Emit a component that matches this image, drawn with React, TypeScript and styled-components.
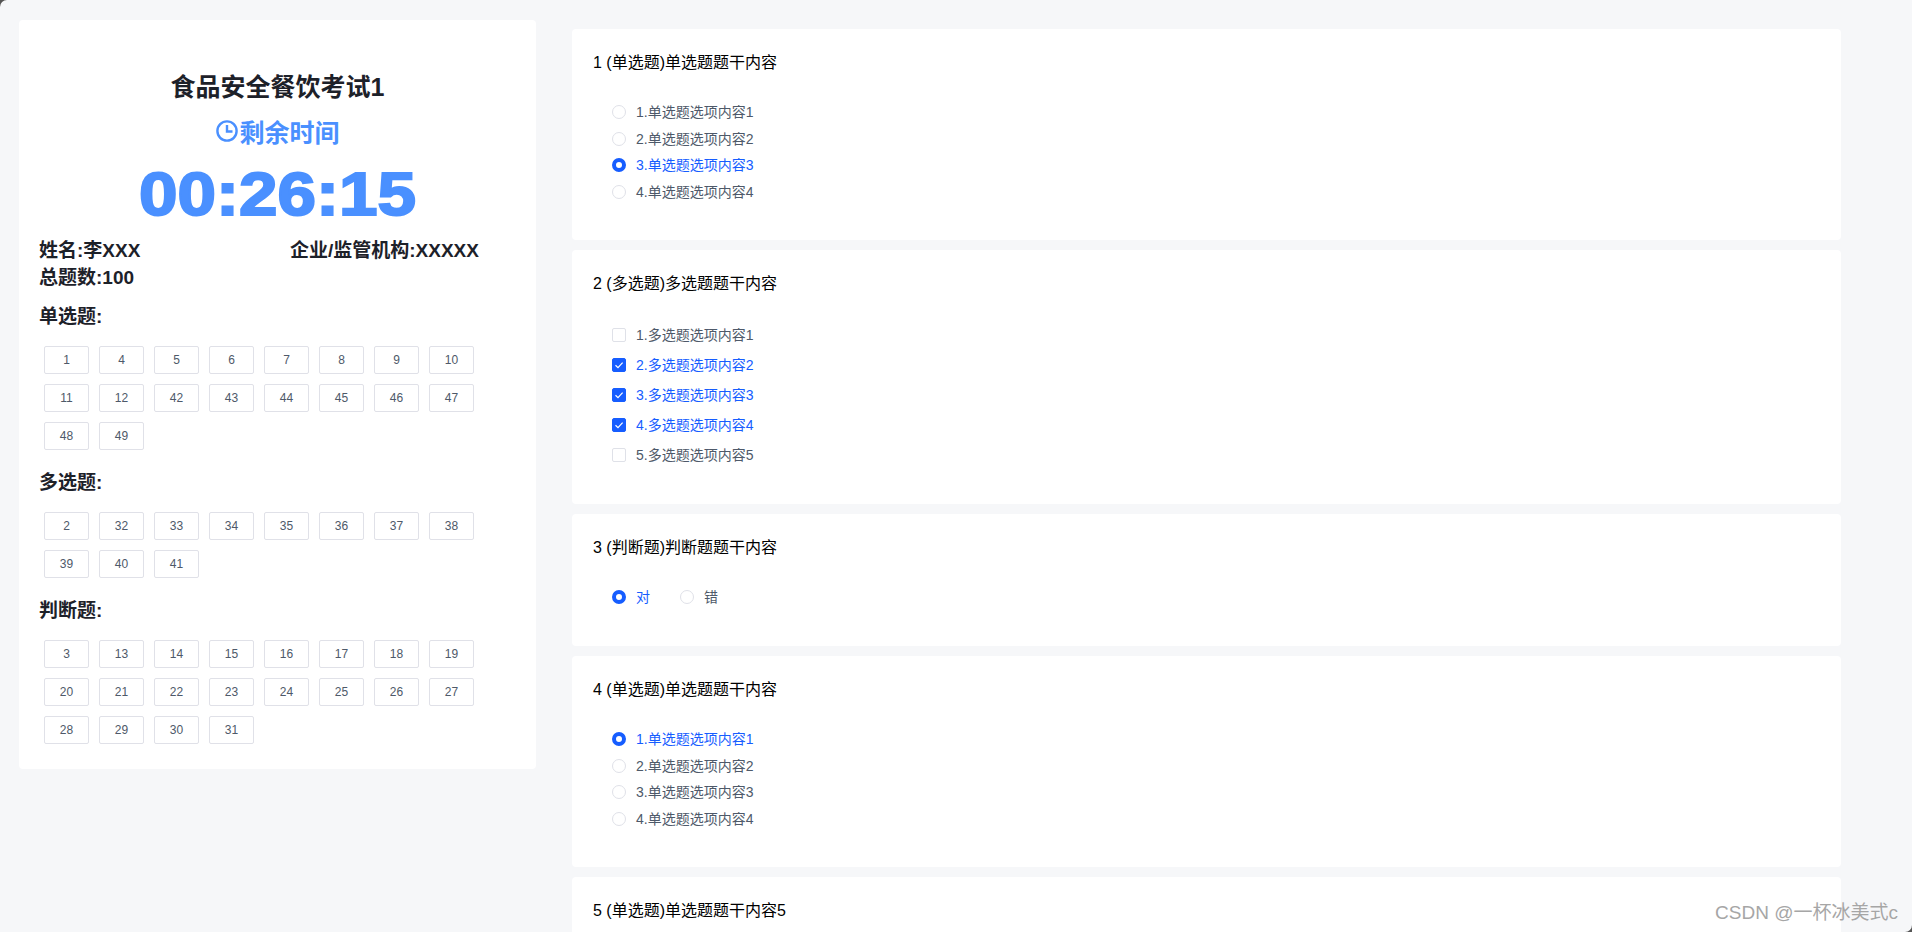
import React from "react";
import styled, { createGlobalStyle } from "styled-components";

const GlobalStyle = createGlobalStyle`
  html, body {
    margin: 0;
    padding: 0;
    height: 932px;
    overflow: hidden;
    background: #f6f7f9;
    font-family: "Liberation Sans", "Noto Sans CJK SC", sans-serif;
  }
`;

const Page = styled.div`
  position: relative;
  width: 1912px;
  height: 932px;
  overflow: hidden;
  display: flex;
  align-items: flex-start;
  gap: 36px;
  padding: 20px 0 0 19px;
  box-sizing: border-box;
  background: #f6f7f9;
`;

const Sidebar = styled.aside`
  width: 517px;
  height: 749px;
  flex: none;
  box-sizing: border-box;
  padding: 0 20px;
  background: #fff;
  border-radius: 4px;
  color: #1d2129;
`;

const ExamTitle = styled.h1`
  margin: 0;
  padding-top: 48px;
  height: 38px;
  line-height: 38px;
  font-size: 25px;
  font-weight: 700;
  text-align: center;
`;

const TimeLabel = styled.div`
  margin-top: 7px;
  height: 36px;
  display: flex;
  align-items: center;
  justify-content: center;
  font-size: 25px;
  font-weight: 700;
  color: #4a90ff;
`;

// the original digits are a black-weight face, so the bold one is widened and stroked
const Countdown = styled.div`
  margin-top: 7px;
  height: 76px;
  line-height: 76px;
  font-size: 61px;
  font-weight: 700;
  text-align: center;
  color: #4a90ff;
  -webkit-text-stroke: 2px #4a90ff;
  transform: scaleX(1.135);
`;

const Info = styled.div`
  display: grid;
  grid-template-columns: 251px 1fr;
  margin: 5px 0 12px;
  font-size: 19px;
  font-weight: 700;
  line-height: 27px;
`;

const SectionTitle = styled.h3`
  margin: 0;
  font-size: 19px;
  font-weight: 700;
  line-height: 28px;
`;

const NumberGrid = styled.div`
  display: flex;
  flex-wrap: wrap;
  gap: 10px;
  padding: 15px 0 19px 5px;
  width: 450px;
`;

const NumberButton = styled.button`
  width: 45px;
  height: 28px;
  padding: 0;
  box-sizing: border-box;
  border: 1px solid #e0e1e8;
  border-radius: 2px;
  background: #fff;
  font: 12px "Liberation Sans", sans-serif;
  color: #4e5969;
`;

const QuestionList = styled.main`
  margin-top: 9px;
  width: 1269px;
  flex: none;
  display: flex;
  flex-direction: column;
  gap: 10px;
`;

const QuestionCard = styled.section<{ $height: number }>`
  height: ${(p) => p.$height}px;
  flex: none;
  box-sizing: border-box;
  padding: 23px 21px 0;
  background: #fff;
  border-radius: 4px;
`;

const Stem = styled.div`
  font-size: 16px;
  line-height: 22px;
  color: #000;
`;

const Options = styled.div<{ $inline?: boolean; $gap: number; $top: number }>`
  display: flex;
  flex-direction: ${(p) => (p.$inline ? "row" : "column")};
  gap: ${(p) => p.$gap}px;
  margin-top: ${(p) => p.$top}px;
  padding-left: 19px;
`;

const Option = styled.label<{ $active?: boolean }>`
  display: flex;
  align-items: center;
  gap: 10px;
  height: 20px;
  font-size: 14px;
  line-height: 20px;
  color: ${(p) => (p.$active ? "#165dff" : "#4e5969")};
`;

const RadioDot = styled.span<{ $active?: boolean }>`
  width: 14px;
  height: 14px;
  flex: none;
  box-sizing: border-box;
  border-radius: 50%;
  border: ${(p) => (p.$active ? "4px solid #165dff" : "1px solid #dfe1e8")};
  background: #fff;
`;

const CheckBox = styled.span<{ $active?: boolean }>`
  width: 14px;
  height: 14px;
  flex: none;
  box-sizing: border-box;
  display: flex;
  align-items: center;
  justify-content: center;
  border-radius: 2px;
  border: 1px solid ${(p) => (p.$active ? "#165dff" : "#dfe1e8")};
  background: ${(p) => (p.$active ? "#165dff" : "#fff")};
`;

const Watermark = styled.div`
  position: absolute;
  right: 14px;
  bottom: 7px;
  font-size: 19px;
  line-height: 24px;
  color: #a6a6a6;
  text-shadow: 0 0 1px #fff;
`;

const WindowCorner = styled.svg<{ $flip?: boolean }>`
  position: absolute;
  width: 7px;
  height: 7px;
  ${(p) => (p.$flip ? "right: 0; bottom: 0; transform: rotate(180deg);" : "left: 0; top: 0;")}
`;

const ClockIcon = () => (
  <svg width="24" height="24" viewBox="0 0 24 24" fill="none" stroke="#4a90ff" strokeWidth="2.4">
    <circle cx="12" cy="12" r="9.6" />
    <path d="M12 6v6.5h5.5" />
  </svg>
);

const CheckMark = () => (
  <svg width="10" height="10" viewBox="0 0 10 10" fill="none" stroke="#fff" strokeWidth="1.2">
    <path d="M1.5 5.2 4 7.6 8.6 2.6" />
  </svg>
);

const sections = [
  { title: "单选题:", numbers: [1, 4, 5, 6, 7, 8, 9, 10, 11, 12, 42, 43, 44, 45, 46, 47, 48, 49] },
  { title: "多选题:", numbers: [2, 32, 33, 34, 35, 36, 37, 38, 39, 40, 41] },
  { title: "判断题:", numbers: [3, 13, 14, 15, 16, 17, 18, 19, 20, 21, 22, 23, 24, 25, 26, 27, 28, 29, 30, 31] },
];

const radioTexts = [1, 2, 3, 4].map((i) => `${i}.单选题选项内容${i}`);

const App = () => {
  return (
    <Page>
      <GlobalStyle />
      <WindowCorner viewBox="0 0 8 8">
        <path d="M0 0h8A8 8 0 0 0 0 8z" fill="#555" />
      </WindowCorner>
      <Sidebar>
        <ExamTitle>食品安全餐饮考试1</ExamTitle>
        <TimeLabel>
          <ClockIcon />
          剩余时间
        </TimeLabel>
        <Countdown>00:26:15</Countdown>
        <Info>
          <span>姓名:李XXX</span>
          <span>企业/监管机构:XXXXX</span>
          <span>总题数:100</span>
        </Info>
        {sections.map((s) => (
          <div key={s.title}>
            <SectionTitle>{s.title}</SectionTitle>
            <NumberGrid>
              {s.numbers.map((n) => (
                <NumberButton key={n}>{n}</NumberButton>
              ))}
            </NumberGrid>
          </div>
        ))}
      </Sidebar>
      <QuestionList>
        <QuestionCard $height={211}>
          <Stem>1 (单选题)单选题题干内容</Stem>
          <Options $gap={6.6} $top={28}>
            {radioTexts.map((t, i) => (
              <Option key={t} $active={i === 2}>
                <RadioDot $active={i === 2} />
                {t}
              </Option>
            ))}
          </Options>
        </QuestionCard>
        <QuestionCard $height={254}>
          <Stem>2 (多选题)多选题题干内容</Stem>
          <Options $gap={10} $top={30}>
            {[1, 2, 3, 4, 5].map((i) => {
              const active = i > 1 && i < 5;
              return (
                <Option key={i} $active={active}>
                  <CheckBox $active={active}>{active && <CheckMark />}</CheckBox>
                  {`${i}.多选题选项内容${i}`}
                </Option>
              );
            })}
          </Options>
        </QuestionCard>
        <QuestionCard $height={132}>
          <Stem>3 (判断题)判断题题干内容</Stem>
          <Options $inline $gap={30} $top={28}>
            <Option $active>
              <RadioDot $active />对
            </Option>
            <Option>
              <RadioDot />错
            </Option>
          </Options>
        </QuestionCard>
        <QuestionCard $height={211}>
          <Stem>4 (单选题)单选题题干内容</Stem>
          <Options $gap={6.6} $top={28}>
            {radioTexts.map((t, i) => (
              <Option key={t} $active={i === 0}>
                <RadioDot $active={i === 0} />
                {t}
              </Option>
            ))}
          </Options>
        </QuestionCard>
        <QuestionCard $height={211}>
          <Stem>5 (单选题)单选题题干内容5</Stem>
        </QuestionCard>
      </QuestionList>
      <Watermark>CSDN @一杯冰美式c</Watermark>
      <WindowCorner $flip viewBox="0 0 8 8">
        <path d="M0 0h8A8 8 0 0 0 0 8z" fill="#555" />
      </WindowCorner>
    </Page>
  );
};

export default App;
